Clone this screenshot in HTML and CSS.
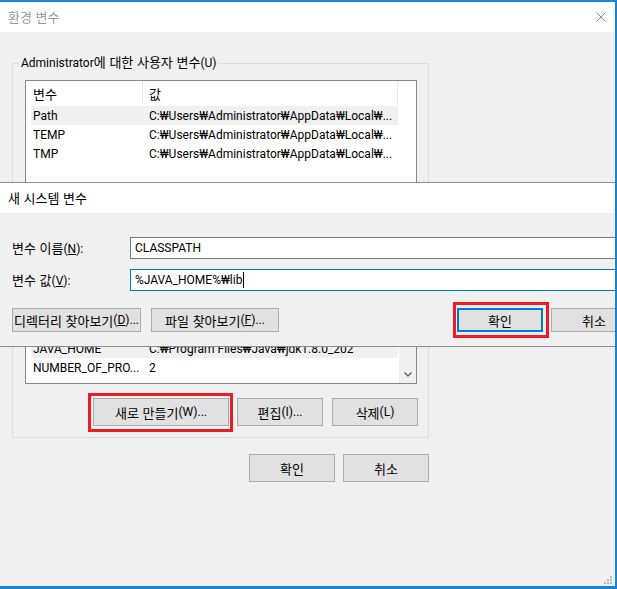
FILE: index.html
```html
<!DOCTYPE html>
<html lang="ko">
<head>
<meta charset="utf-8">
<title>환경 변수</title>
<link rel="stylesheet" href="styles.css">
</head>
<body>
<div class="screen">
  <div class="win">
    <div class="titlebar">
      <span class="title ko">환경 변수</span>
      <svg class="close" width="10" height="10" viewBox="0 0 10 10"><path d="M0.5 0.5L9.5 9.5M9.5 0.5L0.5 9.5" stroke="#8a8a8a" stroke-width="1" fill="none"/></svg>
    </div>
    <div class="win-body">
      <fieldset class="group user">
        <legend>Administrator<span class="ko">에 대한 사용자 변수</span>(U)</legend>
        <div class="listbox user-list">
          <div class="lv">
            <div class="lv-header"><div class="hcell c1 ko">변수</div><div class="hcell c2 ko">값</div></div>
            <div class="lv-row sel"><span class="c1">Path</span><span class="c2">C:₩Users₩Administrator₩AppData₩Local₩...</span></div>
            <div class="lv-row"><span class="c1">TEMP</span><span class="c2">C:₩Users₩Administrator₩AppData₩Local₩...</span></div>
            <div class="lv-row"><span class="c1">TMP</span><span class="c2">C:₩Users₩Administrator₩AppData₩Local₩...</span></div>
          </div>
        </div>
      </fieldset>
      <fieldset class="group system">
        <legend><span class="ko">시스템 변수</span>(S)</legend>
        <div class="listbox sys-list">
          <div class="lv">
            <div class="lv-header"><div class="hcell c1 ko">변수</div><div class="hcell c2 ko">값</div></div>
            <div class="lv-row"><span class="c1">ComSpec</span><span class="c2">C:₩Windows₩system32₩cmd.exe</span></div>
            <div class="lv-row"><span class="c1">DriverData</span><span class="c2">C:₩Windows₩System32₩Drivers₩DriverData</span></div>
            <div class="lv-row sel"><span class="c1">JAVA_HOME</span><span class="c2">C:₩Program Files₩Java₩jdk1.8.0_202</span></div>
            <div class="lv-row"><span class="c1">NUMBER_OF_PRO...</span><span class="c2">2</span></div>
          </div>
          <div class="vscroll">
            <div class="sb-arrow"><svg width="8" height="5" viewBox="0 0 8 5"><path d="M0.5 0.5L4 4L7.5 0.5" stroke="#606060" stroke-width="1.4" fill="none"/></svg></div>
          </div>
        </div>
        <div class="group-buttons">
          <div class="btn btn-new"><span class="ko">새로 만들기</span>(W)...</div>
          <div class="btn btn-edit"><span class="ko">편집</span>(I)...</div>
          <div class="btn btn-del"><span class="ko">삭제</span>(L)</div>
        </div>
      </fieldset>
      <div class="win-actions">
        <div class="btn act-ok ko">확인</div>
        <div class="btn act-cancel ko">취소</div>
      </div>
    </div>
    <svg class="grip" width="9" height="9" viewBox="0 0 9 9">
      <rect x="6" y="0" width="2" height="2" fill="#b9b9b9"/>
      <rect x="3" y="3" width="2" height="2" fill="#b9b9b9"/>
      <rect x="6" y="3" width="2" height="2" fill="#b9b9b9"/>
      <rect x="0" y="6" width="2" height="2" fill="#b9b9b9"/>
      <rect x="3" y="6" width="2" height="2" fill="#b9b9b9"/>
      <rect x="6" y="6" width="2" height="2" fill="#b9b9b9"/>
    </svg>
  </div>

  <div class="dialog">
    <div class="dlg-title ko">새 시스템 변수</div>
    <div class="dlg-body">
      <div class="field">
        <label><span class="ko">변수 이름</span>(<u>N</u>):</label>
        <div class="input">CLASSPATH</div>
      </div>
      <div class="field">
        <label><span class="ko">변수 값</span>(<u>V</u>):</label>
        <div class="input focus">%JAVA_HOME%₩lib<span class="caret"></span></div>
      </div>
      <div class="dlg-buttons">
        <div class="btn sm btn-dir"><span class="ko">디렉터리 찾아보기</span>(<u>D</u>)...</div>
        <div class="btn sm btn-file"><span class="ko">파일 찾아보기</span>(<u>F</u>)...</div>
        <div class="btn sm btn-ok ko">확인</div>
        <div class="btn sm btn-cancel ko">취소</div>
      </div>
    </div>
  </div>

  <div class="mark mark-ok"></div>
  <div class="mark mark-new"></div>
</div>
</body>
</html>
```

FILE: styles.css
```css
* { box-sizing: border-box; }

body {
  margin: 0;
  font-family: Roboto, "Noto Sans CJK KR", sans-serif;
  font-size: 12px;
  color: #000;
}

/* Hangul runs: Noto Sans CJK KR at 13px matches the 12px-advance Hangul of the original */
.ko { font-family: "Noto Sans CJK KR", Roboto, sans-serif; font-size: 13px; line-height: 1; }

.screen {
  position: relative;
  width: 617px;
  height: 589px;
  overflow: hidden;
  background: #f0f0f0;
  border-top: 2px solid #1883d7;
  border-right: 2px solid #1883d7;
  border-bottom: 3px solid #1883d7;
}

.win { height: 100%; }

.titlebar {
  height: 30px;
  background: #fff;
  display: flex;
  align-items: center;
  justify-content: space-between;
  padding: 0 9px 1px 8px;
}
.title { color: #999; }
.close { display: block; }

.win-body { padding-left: 12px; }

.group {
  width: 417px;
  margin: 0;
  padding: 0;
  border: 1px solid #dcdcdc;
  min-width: 0;
}
.group legend {
  margin-left: 6px;
  padding: 0 2px;
  line-height: 16px;
  height: 16px;
}
.user { margin-top: 23px; padding-bottom: 10px; }
.system { margin-top: 9px; padding-bottom: 11px; }

.listbox {
  margin: 9px 0 0 12px;
  width: 392px;
  border: 1px solid #828790;
  background: #fff;
  display: flex;
  overflow: hidden;
}
.user-list { height: 150px; }
.sys-list { height: 109px; }

.lv { flex: 1; padding-left: 5px; overflow: hidden; }

.lv-header { display: flex; height: 25px; }
.hcell {
  display: flex;
  align-items: center;
  border-right: 1px solid #e5e5e5;
  height: 24px;
}
.hcell.c1 { width: 112px; padding-left: 2px; }
.hcell.c2 { width: 255px; padding-left: 6px; }

.lv-row {
  display: flex;
  align-items: center;
  height: 19px;
  width: 367px;
  white-space: nowrap;
}
.lv-row.sel { background: #f0f0f0; }
.lv-row .c1 { width: 112px; padding-left: 2px; overflow: hidden; }
.lv-row .c2 { flex: 1; padding-left: 6px; overflow: hidden; }

.vscroll {
  width: 17px;
  background: #f0f0f0;
  display: flex;
  flex-direction: column;
  justify-content: flex-end;
}
.sb-arrow {
  height: 17px;
  display: flex;
  align-items: center;
  justify-content: center;
}
.sb-arrow svg { display: block; }

.btn {
  height: 28px;
  border: 1px solid #adadad;
  background: #e1e1e1;
  display: flex;
  align-items: center;
  justify-content: center;
  white-space: nowrap;
}

.group-buttons {
  display: flex;
  justify-content: flex-end;
  margin: 14px 10px 0 0;
}
.btn-new { width: 136px; }
.btn-edit { width: 86px; margin-left: 8px; }
.btn-del { width: 86px; margin-left: 9px; }

.win-actions {
  width: 417px;
  display: flex;
  justify-content: flex-end;
  margin-top: 16px;
}
.act-ok { width: 86px; }
.act-cancel { width: 86px; margin-left: 8px; }

.grip { position: absolute; right: 2px; bottom: 1px; }

/* overlaying dialog window */
.dialog {
  position: absolute;
  left: -1px;
  top: 180px;
  width: 660px;
  height: 165px;
  border: 1px solid #8c8c8c;
  background: #f0f0f0;
}
.dlg-title {
  height: 30px;
  background: #fff;
  display: flex;
  align-items: center;
  padding: 0 0 2px 8px;
}
.dlg-body { padding: 24px 0 0 12px; }

.field {
  display: grid;
  grid-template-columns: 118px 560px;
  align-items: center;
  height: 22px;
  margin-bottom: 10px;
}
.input {
  height: 22px;
  border: 1px solid #7a7a7a;
  background: #fff;
  padding-left: 4px;
  display: flex;
  align-items: center;
}
.input.focus { border-color: #0078d7; }
.caret {
  display: inline-block;
  width: 1px;
  height: 16px;
  background: #000;
  margin-left: 1px;
}

.dlg-buttons { display: flex; margin-top: 17px; }
.btn.sm { height: 24px; }
.btn-dir { width: 129px; }
.btn-file { width: 128px; margin-left: 10px; }
.btn-ok { width: 86px; margin-left: 178px; border: 2px solid #0078d7; }
.btn-cancel { width: 86px; margin-left: 8px; }

/* red annotation boxes */
.mark {
  position: absolute;
  border: 3px solid #ed1c24;
}
.mark-ok { left: 453px; top: 300px; width: 96px; height: 36px; }
.mark-new { left: 88px; top: 391px; width: 145px; height: 39px; }
```
